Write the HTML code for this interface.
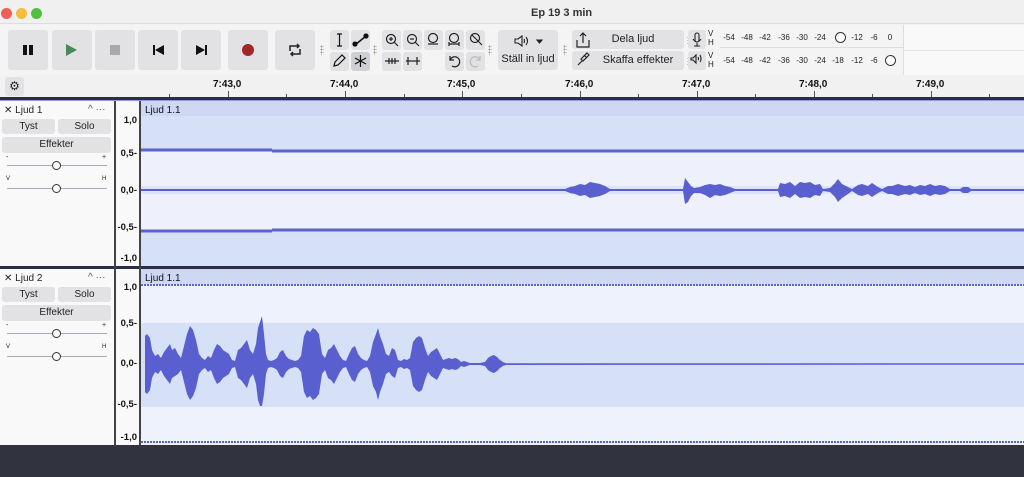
<!DOCTYPE html>
<html><head><meta charset="utf-8"><style>
*{margin:0;padding:0;box-sizing:border-box}
body{width:1024px;height:477px;overflow:hidden;background:#f2f2f2;font-family:"Liberation Sans",sans-serif;position:relative;color:#222}
.a{position:absolute}
.btn{position:absolute;background:#e2e2e5;border-radius:3px}
.sb{position:absolute;background:#e2e2e5;border-radius:3px;font-size:11px;text-align:center;line-height:19px}
.grip{position:absolute;width:4px;height:10px;background-image:radial-gradient(#999 0.8px,transparent 1px);background-size:3px 3px}
.lbl{position:absolute;font-size:10px;font-weight:bold;color:#111}
.tick{position:absolute;width:1px;background:#555}
.ax{position:absolute;font-size:9.5px;font-weight:bold;color:#111;right:2px;white-space:nowrap}
.m{position:absolute;font-size:8px;color:#222;width:16px;text-align:center}
</style></head><body>
<!-- title bar -->
<div class="a" style="left:0;top:0;width:1024px;height:24px;background:#f0f0f0;border-bottom:1px solid #ddd"></div>
<div class="a" style="left:1px;top:8px;width:11px;height:11px;border-radius:50%;background:#ed5f57"></div>
<div class="a" style="left:16px;top:8px;width:11px;height:11px;border-radius:50%;background:#f4bd3c"></div>
<div class="a" style="left:31px;top:8px;width:11px;height:11px;border-radius:50%;background:#4fc13f"></div>
<div class="a" style="left:531px;top:7px;font-size:11px;font-weight:bold;color:#333">Ep 19 3 min</div>
<!-- toolbar -->
<div class="a" style="left:0;top:25px;width:1024px;height:50px;background:#f4f4f4"></div>
<div class="a" style="left:903px;top:25px;width:121px;height:50px;background:#f9f9f9;border-left:1px solid #ddd"></div>
<div class="a" style="left:903px;top:50px;width:121px;height:1px;background:#e4e4e4"></div>
<div class="btn" style="left:8px;top:30px;width:40px;height:40px"></div>
<div class="a" style="left:23px;top:45px;width:4px;height:10px;background:#111"></div><div class="a" style="left:29px;top:45px;width:4px;height:10px;background:#111"></div>
<div class="btn" style="left:52px;top:30px;width:40px;height:40px"></div>
<div class="a" style="left:66px;top:44px;width:0;height:0;border-left:11px solid #4a8a5a;border-top:6px solid transparent;border-bottom:6px solid transparent"></div>
<div class="btn" style="left:95px;top:30px;width:40px;height:40px"></div>
<div class="a" style="left:110px;top:45px;width:10px;height:10px;background:#a8a8ad"></div>
<div class="btn" style="left:138px;top:30px;width:40px;height:40px"></div>
<div class="a" style="left:153px;top:45px;width:2px;height:10px;background:#111"></div><div class="a" style="left:155px;top:45px;border-right:9px solid #111;border-top:5px solid transparent;border-bottom:5px solid transparent"></div>
<div class="btn" style="left:181px;top:30px;width:40px;height:40px"></div>
<div class="a" style="left:196px;top:45px;border-left:9px solid #111;border-top:5px solid transparent;border-bottom:5px solid transparent"></div><div class="a" style="left:205px;top:45px;width:2px;height:10px;background:#111"></div>
<div class="btn" style="left:228px;top:30px;width:40px;height:40px"></div>
<div class="a" style="left:242px;top:44px;width:12px;height:12px;border-radius:50%;background:#a02828"></div>
<div class="btn" style="left:275px;top:30px;width:40px;height:40px"></div>
<svg class="a" style="left:287px;top:42px" width="16" height="16" viewBox="0 0 16 16" fill="none" stroke="#222" stroke-width="1.5"><path d="M3 9V4h9M10 2l2 2-2 2M13 7v5H4M6 10l-2 2 2 2"/></svg>
<div class="grip" style="left:320px;top:45px"></div>
<div class="btn" style="left:330px;top:30px;width:19px;height:20px"></div>
<div class="btn" style="left:351px;top:30px;width:19px;height:20px"></div>
<div class="btn" style="left:330px;top:52px;width:19px;height:19px"></div>
<div class="btn" style="left:351px;top:52px;width:19px;height:19px;background:#cfd0d5"></div>
<svg class="a" style="left:330px;top:30px" width="40" height="42" fill="none" stroke="#111" stroke-width="1.2">
<path d="M7 4h5M9.5 4v12M7 16h5"/>
<path d="M25 15l11-9" stroke-width="1.5"/><circle cx="25" cy="14" r="2" fill="#111"/><circle cx="36" cy="6" r="2" fill="#111"/>
<path d="M4 36l1-4 7-7 3 3-7 7z"/>
<path d="M30.5 25v12M25 28l11 6M25 34l11-6"/>
</svg>
<div class="grip" style="left:373px;top:45px"></div>
<div class="btn" style="left:382px;top:30px;width:19px;height:20px"></div><div class="btn" style="left:403px;top:30px;width:19px;height:20px"></div><div class="btn" style="left:424px;top:30px;width:19px;height:20px"></div><div class="btn" style="left:445px;top:30px;width:19px;height:20px"></div><div class="btn" style="left:466px;top:30px;width:19px;height:20px"></div>
<div class="btn" style="left:382px;top:52px;width:19px;height:19px"></div><div class="btn" style="left:403px;top:52px;width:19px;height:19px"></div><div class="btn" style="left:445px;top:52px;width:19px;height:19px"></div><div class="btn" style="left:466px;top:52px;width:19px;height:19px"></div>
<svg class="a" style="left:382px;top:30px" width="104" height="42" fill="none" stroke="#222" stroke-width="1.2">
<circle cx="9" cy="9" r="4.5"/><path d="M12 12l4 4M7 9h4M9 7v4"/>
<circle cx="30" cy="9" r="4.5"/><path d="M33 12l4 4M28 9h4"/>
<circle cx="51" cy="8" r="4.5"/><path d="M46 14h10"/>
<circle cx="72" cy="8" r="4.5"/><path d="M67 14h10M67 12v4M77 12v4"/>
<circle cx="93" cy="8" r="4.5"/><path d="M96 11l4 4M90 5l7 7"/>
<path d="M3 31h14M7 28v6M10 28v6M13 28v6"/><path d="M24 31h14M26 27v8M35 27v8"/>
<path d="M68 30a5 5 0 1 1 2 6M68 26v4h4"/><path d="M98 30a5 5 0 1 0-2 6M98 26v4h-4" stroke="#bbb"/>
</svg>
<div class="grip" style="left:488px;top:45px"></div>
<div class="sb" style="left:498px;top:30px;width:60px;height:40px"></div>
<svg class="a" style="left:513px;top:34px" width="32" height="14" fill="none" stroke="#222" stroke-width="1.1"><path d="M2 5h3l4-3v10l-4-3H2z"/><path d="M11 5q1 2 0 4M13 3q3 4 0 8"/><path d="M24 6h5l-2.5 3z" fill="#222"/></svg>
<div class="a" style="left:498px;top:53px;width:60px;text-align:center;font-size:11px">Ställ in ljud</div>
<div class="grip" style="left:563px;top:45px"></div>
<div class="sb" style="left:572px;top:30px;width:112px;height:19px;padding-left:10px">Dela ljud</div>
<div class="sb" style="left:572px;top:51px;width:112px;height:19px;padding-left:20px">Skaffa effekter</div>
<svg class="a" style="left:575px;top:31px" width="16" height="38" fill="none" stroke="#222" stroke-width="1.2"><path d="M2 9v7h12V9M8 12V2M5 5l3-3 3 3"/><path d="M3 34l4-4M6 28l6-6 2 2-6 6zM9 24l3 3"/></svg>
<div class="grip" style="left:687px;top:36px"></div><div class="grip" style="left:687px;top:57px"></div>
<div class="btn" style="left:688px;top:30px;width:18px;height:19px"></div><div class="btn" style="left:688px;top:51px;width:18px;height:19px"></div>
<svg class="a" style="left:688px;top:30px" width="18" height="40" fill="none" stroke="#222" stroke-width="1.1"><rect x="7" y="3" width="4" height="9" rx="2"/><path d="M5 9q4 6 8 0M9 13v3M6 16h6"/><path d="M3 28h2l3-3v8l-3-3H3zM10 27q1 2 0 3M12 25q2 4 0 7"/></svg>
<div class="a" style="left:708px;top:29px;font-size:8px;line-height:9px">V<br>H</div><div class="a" style="left:708px;top:51px;font-size:8px;line-height:9px">V<br>H</div>
<div class="a" style="left:720px;top:31px;width:183px;height:17px;border-bottom:1px solid #ddd"></div>
<div class="m" style="left:721px;top:33px">-54</div><div class="m" style="left:739px;top:33px">-48</div><div class="m" style="left:757px;top:33px">-42</div><div class="m" style="left:776px;top:33px">-36</div><div class="m" style="left:794px;top:33px">-30</div><div class="m" style="left:812px;top:33px">-24</div><div class="m" style="left:830px;top:33px">-1</div><div class="m" style="left:849px;top:33px">-12</div><div class="m" style="left:866px;top:33px">-6</div><div class="m" style="left:882px;top:33px">0</div>
<div class="a" style="left:835px;top:32px;width:11px;height:11px;border:1px solid #333;border-radius:50%;background:#fff"></div>
<div class="m" style="left:721px;top:56px">-54</div><div class="m" style="left:739px;top:56px">-48</div><div class="m" style="left:757px;top:56px">-42</div><div class="m" style="left:776px;top:56px">-36</div><div class="m" style="left:794px;top:56px">-30</div><div class="m" style="left:812px;top:56px">-24</div><div class="m" style="left:830px;top:56px">-18</div><div class="m" style="left:849px;top:56px">-12</div><div class="m" style="left:866px;top:56px">-6</div>
<div class="a" style="left:885px;top:55px;width:11px;height:11px;border:1px solid #333;border-radius:50%;background:#fff"></div>
<!-- ruler -->
<div class="a" style="left:0;top:75px;width:1024px;height:23px;background:#f1f1f1"></div>
<div class="btn" style="left:5px;top:77px;width:19px;height:19px;font-size:12px;text-align:center;line-height:19px">⚙</div>
<div class="lbl" style="left:213px;top:79px">7:43,0</div><div class="lbl" style="left:330px;top:79px">7:44,0</div><div class="lbl" style="left:447px;top:79px">7:45,0</div><div class="lbl" style="left:565px;top:79px">7:46,0</div><div class="lbl" style="left:682px;top:79px">7:47,0</div><div class="lbl" style="left:799px;top:79px">7:48,0</div><div class="lbl" style="left:916px;top:79px">7:49,0</div>
<div class="tick" style="left:228px;top:91px;height:6px"></div><div class="tick" style="left:345px;top:91px;height:6px"></div><div class="tick" style="left:462px;top:91px;height:6px"></div><div class="tick" style="left:580px;top:91px;height:6px"></div><div class="tick" style="left:697px;top:91px;height:6px"></div><div class="tick" style="left:814px;top:91px;height:6px"></div><div class="tick" style="left:931px;top:91px;height:6px"></div>
<div class="tick" style="left:169px;top:94px;height:3px"></div><div class="tick" style="left:286px;top:94px;height:3px"></div><div class="tick" style="left:404px;top:94px;height:3px"></div><div class="tick" style="left:521px;top:94px;height:3px"></div><div class="tick" style="left:638px;top:94px;height:3px"></div><div class="tick" style="left:755px;top:94px;height:3px"></div><div class="tick" style="left:872px;top:94px;height:3px"></div><div class="tick" style="left:989px;top:94px;height:3px"></div>
<div class="a" style="left:0;top:97px;width:1024px;height:3px;background:#2a2e45"></div>
<div class="a" style="left:0;top:100px;width:1024px;height:1px;background:#8c9ad8"></div>
<!-- track panels -->
<div class="a" style="left:0;top:101px;width:1024px;height:344px;background:#f9f9f9"></div>
<div class="a" style="left:0;top:266px;width:1024px;height:3px;background:#2a2e45"></div>
<div class="a" style="left:114px;top:101px;width:2px;height:344px;background:#444"></div>
<div class="a" style="left:139px;top:101px;width:2px;height:344px;background:#444"></div>
<div class="a" style="left:0;top:445px;width:1024px;height:32px;background:#31333f"></div>
<!-- track1 left -->
<div class="a" style="left:4px;top:105px;font-size:10px">✕ Ljud 1</div><div class="a" style="left:88px;top:104px;font-size:10px;color:#555">^ ···</div>
<div class="sb" style="left:2px;top:119px;width:53px;height:15px;line-height:15px;font-size:10px">Tyst</div><div class="sb" style="left:58px;top:119px;width:53px;height:15px;line-height:15px;font-size:10px">Solo</div>
<div class="sb" style="left:2px;top:137px;width:109px;height:16px;line-height:16px;font-size:10px">Effekter</div>
<div class="a" style="left:6px;top:154px;font-size:7px">-</div><div class="a" style="left:102px;top:154px;font-size:7px">+</div>
<div class="a" style="left:7px;top:165px;width:100px;height:1px;background:#aab"></div><div class="a" style="left:52px;top:161px;width:9px;height:9px;border:1px solid #333;border-radius:50%;background:#fafafa"></div>
<div class="a" style="left:6px;top:176px;font-size:6px">V</div><div class="a" style="left:102px;top:176px;font-size:6px">H</div>
<div class="a" style="left:7px;top:188px;width:100px;height:1px;background:#aab"></div><div class="a" style="left:52px;top:184px;width:9px;height:9px;border:1px solid #333;border-radius:50%;background:#fafafa"></div>
<!-- track2 left -->
<div class="a" style="left:4px;top:273px;font-size:10px">✕ Ljud 2</div><div class="a" style="left:88px;top:272px;font-size:10px;color:#555">^ ···</div>
<div class="sb" style="left:2px;top:287px;width:53px;height:15px;line-height:15px;font-size:10px">Tyst</div><div class="sb" style="left:58px;top:287px;width:53px;height:15px;line-height:15px;font-size:10px">Solo</div>
<div class="sb" style="left:2px;top:305px;width:109px;height:16px;line-height:16px;font-size:10px">Effekter</div>
<div class="a" style="left:6px;top:322px;font-size:7px">-</div><div class="a" style="left:102px;top:322px;font-size:7px">+</div>
<div class="a" style="left:7px;top:333px;width:100px;height:1px;background:#aab"></div><div class="a" style="left:52px;top:329px;width:9px;height:9px;border:1px solid #333;border-radius:50%;background:#fafafa"></div>
<div class="a" style="left:6px;top:344px;font-size:6px">V</div><div class="a" style="left:102px;top:344px;font-size:6px">H</div>
<div class="a" style="left:7px;top:356px;width:100px;height:1px;background:#aab"></div><div class="a" style="left:52px;top:352px;width:9px;height:9px;border:1px solid #333;border-radius:50%;background:#fafafa"></div>
<!-- axes -->
<div class="a" style="left:116px;top:101px;width:23px;height:165px">
<div class="ax" style="top:14px">1,0</div><div class="ax" style="top:47px">0,5-</div><div class="ax" style="top:84px">0,0-</div><div class="ax" style="top:121px">-0,5-</div><div class="ax" style="top:152px">-1,0</div></div>
<div class="a" style="left:116px;top:269px;width:23px;height:176px">
<div class="ax" style="top:13px">1,0</div><div class="ax" style="top:49px">0,5-</div><div class="ax" style="top:89px">0,0-</div><div class="ax" style="top:130px">-0,5-</div><div class="ax" style="top:163px">-1,0</div></div>
<!-- waveforms -->
<svg class="a" style="left:0;top:0" width="1024" height="477">
<rect x="141" y="101" width="883" height="165" fill="#d6e1f8"/>
<rect x="141" y="151" width="883" height="80" fill="#eef1fc"/>
<rect x="141" y="186" width="883" height="8" fill="#dbe4f8"/>
<rect x="141" y="101" width="883" height="15" fill="#cfd8f3"/>
<text x="145" y="113" font-family="Liberation Sans" font-size="10" fill="#111">Ljud 1.1</text>
<path d="M141 150H272M272 151H1024M141 231H272M272 230H1024" stroke="#5a64cc" stroke-width="3"/>
<path d="M141 190H1024" stroke="#2c3150" stroke-width="1.5"/>
<polygon fill="#5a5fcf" points="141,189 565,189 570,187 575,186 580,184 585,185 590,182 595,183 600,184 605,186 610,189 640,189 683,189 685,178 688,182 691,186 694,188 700,187 705,185 710,184 715,185 720,184 725,186 730,187 735,189 778,189 780,183 785,184 790,182 795,186 800,182 805,183 810,182 815,185 820,184 823,189 830,188 835,183 838,179 842,184 848,187 852,189 858,185 862,184 868,186 872,183 878,187 882,189 888,186 892,186 898,184 905,186 910,185 915,187 920,185 925,186 930,184 935,186 940,185 945,186 950,189 960,189 963,187 968,187 971,189 1024,189 1024,191 971,191 968,193 963,193 960,191 950,191 945,194 940,195 935,194 930,196 925,194 920,195 915,193 910,195 905,194 898,196 892,194 888,194 882,191 878,193 872,197 868,194 862,196 858,195 852,191 848,194 842,198 838,202 835,197 830,192 823,191 820,196 815,195 810,198 805,197 800,198 795,194 790,198 785,196 780,197 778,191 735,191 730,193 725,195 720,196 715,195 710,198 705,195 700,193 694,193 691,196 688,202 685,204 683,191 640,191 610,191 605,194 600,196 595,197 590,198 585,195 580,196 575,194 570,193 565,191 141,191"/>
<rect x="141" y="269" width="883" height="176" fill="#eef2fc"/>
<rect x="141" y="323" width="883" height="84" fill="#d6e1f8"/>
<rect x="141" y="269" width="883" height="15" fill="#cfd8f3"/>
<text x="145" y="281" font-family="Liberation Sans" font-size="10" fill="#111">Ljud 1.1</text>
<path d="M141 285H1024M141 442H1024" stroke="#5a64cc" stroke-width="2" stroke-dasharray="2 1"/>
<polygon fill="#5a5fcf" points="145,336 147,334 150,338 152,350 155,356 158,354 161,358 164,352 167,348 170,344 172,350 175,348 178,354 181,358 184,346 187,334 190,326 193,330 196,340 199,354 202,358 205,360 208,356 211,358 214,350 217,344 220,346 223,350 226,352 229,354 232,360 235,361 238,350 241,348 244,344 247,340 250,350 253,354 256,344 258,328 260,322 262,316 264,334 266,354 268,360 271,361 274,360 277,358 280,352 283,350 286,356 289,359 292,360 295,361 298,360 301,356 304,336 307,330 310,332 313,328 316,330 319,334 322,354 325,358 328,350 331,348 334,344 337,350 340,356 343,360 346,361 349,354 352,348 355,346 358,354 361,358 364,360 367,361 370,356 373,342 376,334 378,328 380,336 383,344 386,354 389,356 392,348 395,350 398,360 401,361 404,359 407,360 410,358 413,342 416,338 419,336 422,338 425,348 428,356 431,352 434,350 437,348 440,354 443,360 446,359 449,358 452,359 455,358 458,359 461,362 464,361 467,362 470,363 480,363 485,362 488,358 491,356 494,355 497,357 500,360 503,362 506,363.3 1024,363.3 1024,364.7 506,365 503,366 500,368 497,371 494,373 491,372 488,370 485,366 480,365 470,365 467,366 464,367 461,366 458,369 455,370 452,369 449,370 446,369 443,368 440,374 437,380 434,378 431,376 428,372 425,380 422,390 419,392 416,390 413,386 410,370 407,368 404,369 401,367 398,368 395,378 392,376 389,372 386,374 383,384 380,392 378,400 376,392 373,386 370,372 367,367 364,368 361,370 358,374 355,382 352,380 349,374 346,367 343,368 340,372 337,378 334,384 331,380 328,378 325,370 322,374 319,394 316,398 313,400 310,396 307,398 304,392 301,372 298,368 295,367 292,368 289,369 286,372 283,378 280,376 277,370 274,368 271,367 268,368 266,374 264,394 262,406 260,406 258,400 256,384 253,374 250,378 247,388 244,384 241,380 238,378 235,367 232,368 229,374 226,376 223,378 220,382 217,384 214,378 211,370 208,372 205,368 202,370 199,374 196,388 193,396 190,400 187,394 184,382 181,370 178,374 175,376 172,378 170,384 167,380 164,376 161,370 158,374 155,372 152,378 150,390 147,394 145,392"/>
</svg>
</body></html>
